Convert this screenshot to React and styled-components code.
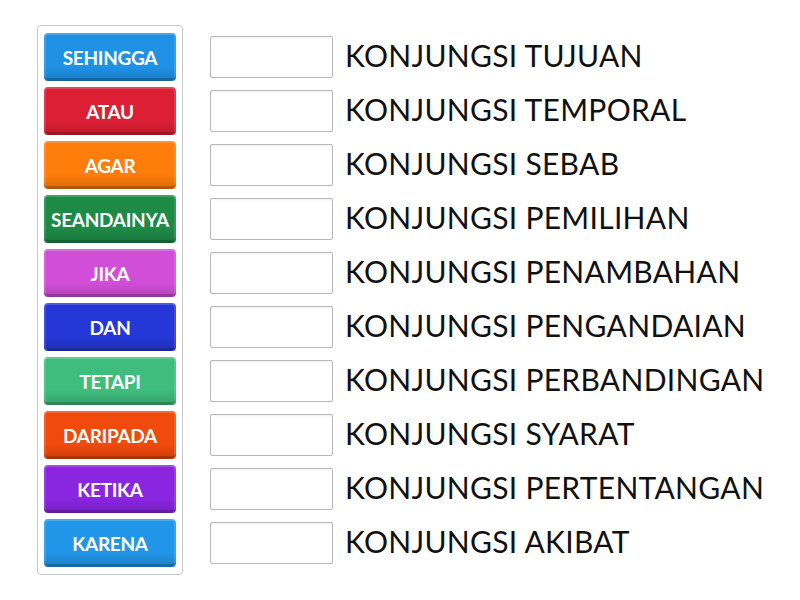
import React from "react";
import styled, { createGlobalStyle } from "styled-components";

const GlobalStyle = createGlobalStyle`
  body {
    margin: 0;
    background: #ffffff;
    font-family: "Lato", "Liberation Sans", sans-serif;
  }
`;

const items = [
  { label: "SEHINGGA", color: "#1f92e6", target: "KONJUNGSI TUJUAN" },
  { label: "ATAU", color: "#dc1f35", target: "KONJUNGSI TEMPORAL" },
  { label: "AGAR", color: "#ff7d0a", target: "KONJUNGSI SEBAB" },
  { label: "SEANDAINYA", color: "#1d8a46", target: "KONJUNGSI PEMILIHAN" },
  { label: "JIKA", color: "#d14ed8", target: "KONJUNGSI PENAMBAHAN" },
  { label: "DAN", color: "#2537d6", target: "KONJUNGSI PENGANDAIAN" },
  { label: "TETAPI", color: "#3fbd7c", target: "KONJUNGSI PERBANDINGAN" },
  { label: "DARIPADA", color: "#f04a0c", target: "KONJUNGSI SYARAT" },
  { label: "KETIKA", color: "#8a25e0", target: "KONJUNGSI PERTENTANGAN" },
  { label: "KARENA", color: "#2196e8", target: "KONJUNGSI AKIBAT" },
];

const App = () => {
  return (
    <>
      <GlobalStyle />
      <Page>
        <Tray>
          {items.map((item) => (
            <Tile key={item.label} $color={item.color}>
              {item.label}
            </Tile>
          ))}
        </Tray>
        <Targets>
          {items.map((item) => (
            <TargetRow key={item.target}>
              <DropBox />
              <Label>{item.target}</Label>
            </TargetRow>
          ))}
        </Targets>
      </Page>
    </>
  );
};

export default App;

const Page = styled.div`
  display: flex;
  align-items: flex-start;
  gap: 27px;
  padding: 25px 0 0 37px;
  width: 800px;
  height: 600px;
  box-sizing: border-box;
`;

const Tray = styled.div`
  display: flex;
  flex-direction: column;
  gap: 6px;
  width: 146px;
  padding: 7px 6px;
  box-sizing: border-box;
  border: 1px solid #c9c9c9;
  border-radius: 4px;
`;

const Tile = styled.div`
  display: flex;
  align-items: center;
  justify-content: center;
  height: 48px;
  border-radius: 4px;
  background: linear-gradient(
    to bottom,
    ${({ $color }) => $color} 0%,
    ${({ $color }) => $color} 70%,
    color-mix(in srgb, ${({ $color }) => $color} 85%, black) 100%
  );
  box-shadow: inset 0 2px 0 rgba(255, 255, 255, 0.18),
    inset 2px 0 0 rgba(255, 255, 255, 0.12),
    inset -2px 0 0 rgba(255, 255, 255, 0.12),
    inset 0 -3px 0 rgba(0, 0, 0, 0.18);
  color: #ffffff;
  font-family: "Lato", "Liberation Sans", sans-serif;
  font-size: 19px;
  font-weight: 700;
  white-space: nowrap;
  letter-spacing: -0.3px;
`;

const Targets = styled.div`
  display: flex;
  flex-direction: column;
  gap: 6px;
  padding-top: 8px;
`;

const TargetRow = styled.div`
  display: flex;
  align-items: center;
  gap: 12px;
  height: 48px;
`;

const DropBox = styled.div`
  width: 123px;
  height: 42px;
  box-sizing: border-box;
  border: 1px solid #b8b8b8;
  border-radius: 2px;
  background: #ffffff;
  box-shadow: inset 0 1px 2px rgba(0, 0, 0, 0.06);
`;

const Label = styled.div`
  font-family: "Lato", "Liberation Sans", sans-serif;
  font-size: 30px;
  letter-spacing: 0.3px;
  color: #111111;
  white-space: nowrap;
  padding-bottom: 5px;
`;
